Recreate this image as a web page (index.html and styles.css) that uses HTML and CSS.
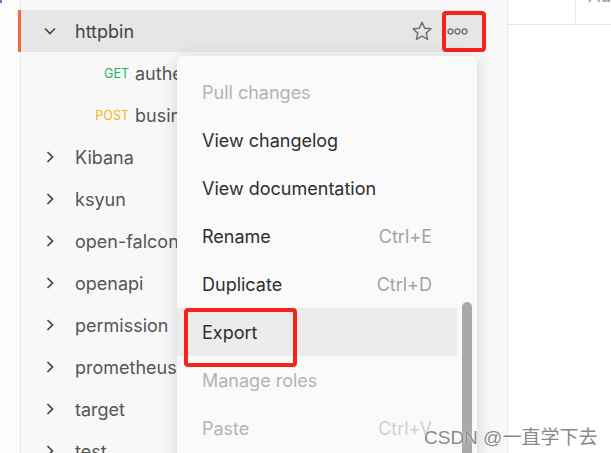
FILE: index.html
```html
<!DOCTYPE html>
<html lang="en">
<head>
    <meta charset="UTF-8">
    <title>Collections</title>
    <link rel="stylesheet" href="styles.css">
</head>
<body>
<div class="app">
    <div class="rail"><span class="rail-mark"></span></div>

    <aside class="sidebar">
        <ul class="tree">
            <li class="row row-active">
                <svg class="chev" width="12" height="12" viewBox="0 0 12 12"><path d="M1 3.5 L6 8.5 L11 3.5" /></svg>
                <span class="name">httpbin</span>
                <span class="row-actions">
                    <svg class="star" width="22" height="22" viewBox="0 0 24 24"><path d="M12 2.5 L14.9 8.9 L21.8 9.6 L16.6 14.3 L18.1 21.1 L12 17.6 L5.9 21.1 L7.4 14.3 L2.2 9.6 L9.1 8.9 Z" /></svg>
                    <button class="more" type="button">
                        <svg width="21" height="7" viewBox="0 0 21 7"><circle cx="3.5" cy="3.5" r="2.4"/><circle cx="10.5" cy="3.5" r="2.4"/><circle cx="17.5" cy="3.5" r="2.4"/></svg>
                    </button>
                </span>
            </li>
            <li class="row row-req"><span class="method get">GET</span><span class="name">authentication</span></li>
            <li class="row row-req"><span class="method post">POST</span><span class="name">business</span></li>
            <li class="row">
                <svg class="chev" width="12" height="12" viewBox="0 0 12 12"><path d="M3.5 1 L8.5 6 L3.5 11" /></svg>
                <span class="name">Kibana</span>
            </li>
            <li class="row">
                <svg class="chev" width="12" height="12" viewBox="0 0 12 12"><path d="M3.5 1 L8.5 6 L3.5 11" /></svg>
                <span class="name">ksyun</span>
            </li>
            <li class="row">
                <svg class="chev" width="12" height="12" viewBox="0 0 12 12"><path d="M3.5 1 L8.5 6 L3.5 11" /></svg>
                <span class="name">open-falcon</span>
            </li>
            <li class="row">
                <svg class="chev" width="12" height="12" viewBox="0 0 12 12"><path d="M3.5 1 L8.5 6 L3.5 11" /></svg>
                <span class="name">openapi</span>
            </li>
            <li class="row">
                <svg class="chev" width="12" height="12" viewBox="0 0 12 12"><path d="M3.5 1 L8.5 6 L3.5 11" /></svg>
                <span class="name">permission</span>
            </li>
            <li class="row">
                <svg class="chev" width="12" height="12" viewBox="0 0 12 12"><path d="M3.5 1 L8.5 6 L3.5 11" /></svg>
                <span class="name">prometheus</span>
            </li>
            <li class="row">
                <svg class="chev" width="12" height="12" viewBox="0 0 12 12"><path d="M3.5 1 L8.5 6 L3.5 11" /></svg>
                <span class="name">target</span>
            </li>
            <li class="row">
                <svg class="chev" width="12" height="12" viewBox="0 0 12 12"><path d="M3.5 1 L8.5 6 L3.5 11" /></svg>
                <span class="name">test</span>
            </li>
        </ul>
    </aside>

    <main class="main">
        <div class="tabs">
            <div class="tab"></div>
            <div class="tab tab-cut"><span>Auth</span></div>
        </div>
    </main>
</div>

<div class="menu">
    <ul class="menu-list">
        <li class="menu-item disabled">Pull changes</li>
        <li class="menu-item">View changelog</li>
        <li class="menu-item">View documentation</li>
        <li class="menu-item">Rename <span class="hotkey">Ctrl+E</span></li>
        <li class="menu-item">Duplicate <span class="hotkey">Ctrl+D</span></li>
        <li class="menu-item hover">Export <span class="mark-box"></span></li>
        <li class="menu-item disabled">Manage roles</li>
        <li class="menu-item disabled">Paste <span class="hotkey">Ctrl+V</span></li>
    </ul>
    <div class="menu-scroll"><div class="thumb"></div></div>
</div>

<div class="watermark">CSDN @一直学下去</div>
</body>
</html>
```

FILE: styles.css
```css
* {
    box-sizing: border-box;
}

html, body {
    margin: 0;
    height: 100%;
    overflow: hidden;
}

body {
    font-family: Inter, "Noto Sans", sans-serif;
    background: #fff;
    color: #333;
    width: 611px;
    height: 453px;
    position: relative;
}

ul {
    list-style: none;
    margin: 0;
    padding: 0;
}

.app {
    display: flex;
    height: 100%;
}

/* left icon rail */
.rail {
    flex: none;
    width: 21px;
    border-right: 1px solid #e6e6e6;
    background: #fcfcfc;
}

.rail-mark {
    display: block;
    width: 2px;
    height: 3px;
    background: #4a7fd6;
}

/* collection tree */
.sidebar {
    flex: none;
    width: 487px;
    background: #f8f8f8;
    border-right: 1px solid #e8e8e8;
}

.tree {
    padding-top: 10px;
}

.row {
    display: flex;
    align-items: center;
    height: 42px;
    padding-left: 23px;
    margin-right: 25px;
    font-size: 18px;
    color: #555;
    white-space: nowrap;
}

.row .chev {
    flex: none;
    fill: none;
    stroke: #444;
    stroke-width: 1.7;
    margin-right: 19px;
}

.row-active {
    margin-left: -3px;
    border-left: 3px solid #f3693a;
    background: #e6e6e6;
    color: #444;
}

.row-actions {
    margin-left: auto;
    display: flex;
    align-items: center;
}

.star {
    fill: none;
    stroke: #6f6f6f;
    stroke-width: 1.6;
    stroke-linejoin: round;
    margin-right: 9px;
}

.more {
    display: flex;
    align-items: center;
    width: 44px;
    height: 41px;
    padding: 0 0 0 1px;
    margin-right: -4px;
    border: 4px solid #f5231b;
    border-radius: 4px;
    background: #e6e6e6;
}

.more svg {
    fill: none;
    stroke: #777;
    stroke-width: 1.5;
}

.row-req {
    padding-left: 54px;
}

.method {
    width: 60px;
    padding-right: 6px;
    text-align: right;
    font-size: 12.5px;
}

.method.get {
    color: #21b357;
}

.method.post {
    color: #f6b21a;
}

/* right pane */
.main {
    flex: 1;
    min-width: 0;
    background: #fff;
}

.tabs {
    display: flex;
    height: 25px;
    border-bottom: 1px solid #e6e6e6;
}

.tab {
    flex: none;
    width: 68px;
    height: 23px;
    border-right: 1px solid #e6e6e6;
}

.tab-cut {
    flex: 1;
    width: auto;
    border: 0;
    padding-left: 12px;
    overflow: hidden;
    color: #999;
    font-size: 18px;
}

.tab-cut span {
    display: block;
    margin-top: -15px;
}

/* context menu (overlay) */
.menu {
    position: absolute;
    left: 177px;
    top: 56px;
    width: 300px;
    height: 420px;
    display: flex;
    background: #fafafa;
    border-radius: 6px;
    box-shadow: 0 2px 16px rgba(0, 0, 0, 0.16);
}

.menu-list {
    flex: 1;
    padding-top: 12px;
}

.menu-item {
    position: relative;
    display: flex;
    align-items: center;
    height: 48px;
    padding: 0 25px;
    font-size: 18px;
    color: #2e2e2e;
}

.menu-item.disabled {
    color: #b3b3b3;
}

.menu-item.hover {
    background: #ececec;
}

.hotkey {
    margin-left: auto;
    color: #a3a3a3;
}

.disabled .hotkey {
    color: #d0d0d0;
}

.mark-box {
    position: absolute;
    left: 7px;
    top: 0;
    width: 113px;
    height: 59px;
    border: 4px solid #f5231b;
    border-radius: 4px;
}

.menu-scroll {
    width: 20px;
    padding: 246px 5px 0;
}

.thumb {
    height: 100%;
    background: #a9a9a9;
    border-radius: 5px 5px 0 0;
}

.watermark {
    position: absolute;
    left: 424px;
    top: 422px;
    font-family: "Liberation Sans", "Noto Sans CJK SC", sans-serif;
    font-size: 19px;
    color: #8a8a8a;
    text-shadow: 0 0 2px #fff;
}
```
